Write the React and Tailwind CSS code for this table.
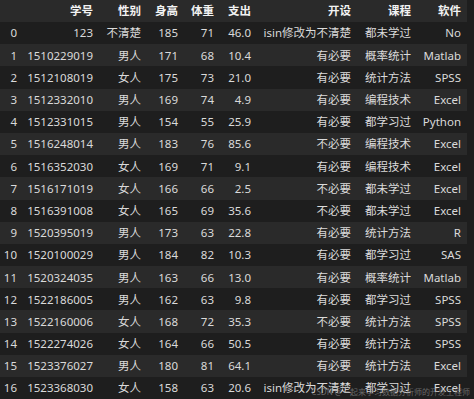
const columns = [
  { key: "idx", label: "", width: 23 },
  { key: "id", label: "学号", width: 76 },
  { key: "sex", label: "性别", width: 48 },
  { key: "height", label: "身高", width: 37 },
  { key: "weight", label: "体重", width: 36 },
  { key: "spend", label: "支出", width: 37 },
  { key: "need", label: "开设", width: 100 },
  { key: "course", label: "课程", width: 60 },
  { key: "tool", label: "软件", width: 50 },
];

const rows = [
  ["123", "不清楚", 185, 71, "46.0", "isin修改为不清楚", "都未学过", "No"],
  ["1510229019", "男人", 171, 68, "10.4", "有必要", "概率统计", "Matlab"],
  ["1512108019", "女人", 175, 73, "21.0", "有必要", "统计方法", "SPSS"],
  ["1512332010", "男人", 169, 74, "4.9", "有必要", "编程技术", "Excel"],
  ["1512331015", "男人", 154, 55, "25.9", "有必要", "都学习过", "Python"],
  ["1516248014", "男人", 183, 76, "85.6", "不必要", "编程技术", "Excel"],
  ["1516352030", "女人", 169, 71, "9.1", "有必要", "编程技术", "Excel"],
  ["1516171019", "女人", 166, 66, "2.5", "不必要", "都未学过", "Excel"],
  ["1516391008", "女人", 165, 69, "35.6", "不必要", "都未学过", "Excel"],
  ["1520395019", "男人", 173, 63, "22.8", "有必要", "统计方法", "R"],
  ["1520100029", "男人", 184, 82, "10.3", "有必要", "都学习过", "SAS"],
  ["1520324035", "男人", 163, 66, "13.0", "有必要", "概率统计", "Matlab"],
  ["1522186005", "男人", 162, 63, "9.8", "有必要", "都学习过", "SPSS"],
  ["1522160006", "女人", 168, 72, "35.3", "不必要", "统计方法", "SPSS"],
  ["1522274026", "女人", 164, 66, "50.5", "有必要", "统计方法", "SPSS"],
  ["1523376027", "男人", 180, 81, "64.1", "有必要", "统计方法", "Excel"],
  ["1523368030", "女人", 158, 63, "20.6", "isin修改为不清楚", "都学习过", "Excel"],
];

export default function App() {
  return (
    <div
      className="relative w-[474px] h-[399px] overflow-hidden bg-[#1e1e1e] text-[#dadada] text-[11.5px]"
      style={{ fontFamily: '"Noto Sans", "Noto Sans CJK SC", sans-serif' }}
    >
      <table className="table-fixed border-collapse w-[467px]">
        <colgroup>
          {columns.map((c) => (
            <col key={c.key} style={{ width: c.width }} />
          ))}
        </colgroup>
        <thead>
          <tr className="h-[22px] bg-[#2a2a2a]">
            {columns.map((c) => (
              <th
                key={c.key}
                className="p-0 pr-[6px] text-right font-bold text-[#f2f2f2] whitespace-nowrap"
              >
                {c.label}
              </th>
            ))}
          </tr>
        </thead>
        <tbody>
          {rows.map((r, i) => (
            <tr
              key={i}
              className={i % 2 === 0 ? "h-[22.2px] bg-[#1e1e1e]" : "h-[22.2px] bg-[#2a2a2a]"}
            >
              <td className="p-0 pr-[6px] text-right whitespace-nowrap">{i}</td>
              {r.map((v, j) => (
                <td key={j} className="p-0 pr-[6px] text-right whitespace-nowrap">
                  {v}
                </td>
              ))}
            </tr>
          ))}
        </tbody>
      </table>
      <div className="absolute right-[4px] bottom-[1px] text-[8px] text-[#9a9a9a] opacity-60 whitespace-nowrap">
        CSDN @一起来学习数据分析师的开发工程师
      </div>
    </div>
  );
}
